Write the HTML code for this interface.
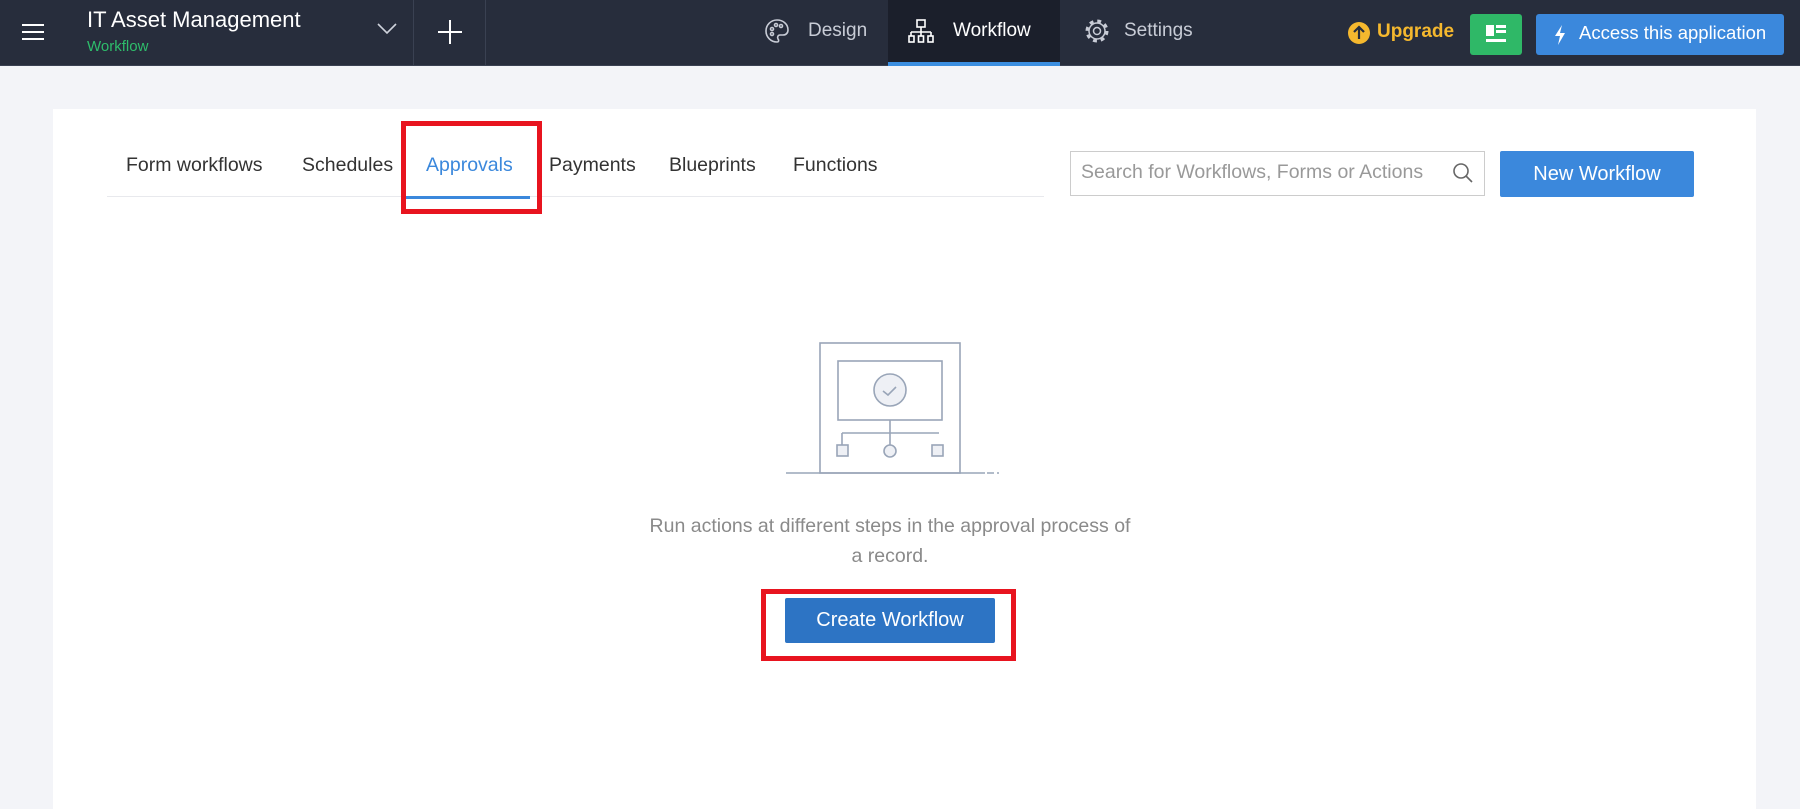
<!DOCTYPE html>
<html><head><meta charset="utf-8"><style>
*{margin:0;padding:0;box-sizing:border-box}
body{width:1800px;height:800px;background:#f3f4f8;font-family:"Liberation Sans",sans-serif;position:relative;overflow:hidden}
.a{position:absolute;white-space:nowrap}
.hdr{position:absolute;left:0;top:0;width:1800px;height:66px;background:#272d3c;border-bottom:1px solid #3a4152}
.card{position:absolute;left:53px;top:109px;width:1703px;height:700px;background:#fff}
.tab{position:absolute;top:154px;font-size:19.5px;color:#333}
</style></head><body>
<div class="hdr">
  <div class="a" style="left:22px;top:24px;width:22px;height:2px;background:#fff;box-shadow:0 7px 0 #fff,0 14px 0 #fff"></div>
  <div class="a" style="left:87px;top:7px;font-size:22px;color:#fff">IT Asset Management</div>
  <div class="a" style="left:87px;top:38px;font-size:15px;color:#2ebd6b">Workflow</div>
  <svg class="a" style="left:376px;top:22px" width="22" height="14"><path d="M2 2 L11 11 L20 2" stroke="#cfd3dc" stroke-width="1.6" fill="none"/></svg>
  <div class="a" style="left:413px;top:0;width:1px;height:66px;background:#3a4152"></div>
  <div class="a" style="left:485px;top:0;width:1px;height:66px;background:#3a4152"></div>
  <svg class="a" style="left:437px;top:19px" width="26" height="26"><path d="M13 1V25M1 13H25" stroke="#fff" stroke-width="2"/></svg>
  <svg class="a" style="left:764px;top:18px" width="26" height="26" fill="none" stroke="#c8ccd6" stroke-width="1.6"><path d="M13 2a11 11 0 1 0 0 22c2 0 2-2 1-3-1-2 0-4 2-4h3c3 0 5-2 5-5C24 6 19 2 13 2z"/><circle cx="8" cy="11" r="1.5"/><circle cx="12" cy="7" r="1.5"/><circle cx="17" cy="8" r="1.5"/><circle cx="8" cy="16" r="1.5"/></svg>
  <div class="a" style="left:808px;top:20px;font-size:19px;color:#c8ccd6">Design</div>
  <div class="a" style="left:888px;top:0;width:172px;height:66px;background:#1b1f2b;border-bottom:4px solid #3b8ee0"></div>
  <svg class="a" style="left:908px;top:19px" width="26" height="26" fill="none" stroke="#fff" stroke-width="1.6"><rect x="9" y="1" width="8" height="7"/><path d="M13 8v5M3 13h20M3 13v4M13 13v4M23 13v4"/><rect x="1" y="17" width="5" height="6"/><rect x="10.5" y="17" width="5" height="6"/><rect x="20" y="17" width="5" height="6"/></svg>
  <div class="a" style="left:953px;top:20px;font-size:19px;color:#fff">Workflow</div>
  <svg class="a" style="left:1084px;top:18px" width="26" height="26" fill="none" stroke="#c8ccd6"><circle cx="13" cy="13" r="10" stroke-width="3" stroke-dasharray="3.9 3.95"/><circle cx="13" cy="13" r="8" stroke-width="1.5"/><circle cx="13" cy="13" r="3.5" stroke-width="1.5"/></svg>
  <div class="a" style="left:1124px;top:20px;font-size:19px;color:#c8ccd6">Settings</div>
  <div class="a" style="left:1348px;top:22px;width:22px;height:22px;border-radius:50%;background:#f5b82e"></div>
  <svg class="a" style="left:1348px;top:22px" width="22" height="22"><path d="M11 17V6M6 10l5-5 5 5" stroke="#272d3c" stroke-width="2.2" fill="none"/></svg>
  <div class="a" style="left:1377px;top:21px;font-size:19px;color:#f5b82e;font-weight:bold">Upgrade</div>
  <div class="a" style="left:1470px;top:14px;width:52px;height:41px;background:#2fb867;border-radius:3px"></div>
  <div class="a" style="left:1486px;top:25px;width:8px;height:11px;background:#fff"></div>
  <div class="a" style="left:1496px;top:25px;width:10px;height:3px;background:#fff;box-shadow:0 5px 0 #fff"></div>
  <div class="a" style="left:1486px;top:39px;width:20px;height:3px;background:#fff"></div>
  <div class="a" style="left:1536px;top:14px;width:248px;height:41px;background:#3b88dc;border-radius:3px"></div>
  <svg class="a" style="left:1553px;top:24px" width="14" height="22"><path d="M9 1L2 12h5l-2 9 7-12H7z" fill="#fff"/></svg>
  <div class="a" style="left:1579px;top:22px;font-size:18.5px;color:#fff">Access this application</div>
</div>
<div class="card"></div>
<div class="tab" style="left:126px">Form workflows</div>
<div class="tab" style="left:302px">Schedules</div>
<div class="tab" style="left:426px;color:#3b88dc">Approvals</div>
<div class="tab" style="left:549px">Payments</div>
<div class="tab" style="left:669px">Blueprints</div>
<div class="tab" style="left:793px">Functions</div>
<div class="a" style="left:107px;top:196px;width:937px;height:1px;background:#e8e9ed"></div>
<div class="a" style="left:406px;top:196px;width:124px;height:3px;background:#3b88dc"></div>
<div class="a" style="left:401px;top:121px;width:141px;height:93px;border:5px solid #e8141f"></div>
<div class="a" style="left:1070px;top:151px;width:415px;height:45px;border:1px solid #ccc;background:#fff"></div>
<div class="a" style="left:1081px;top:161px;font-size:19.5px;color:#999">Search for Workflows, Forms or Actions</div>
<svg class="a" style="left:1452px;top:162px" width="22" height="22" fill="none" stroke="#666" stroke-width="1.6"><circle cx="9" cy="9" r="7"/><path d="M14 14l6 6"/></svg>
<div class="a" style="left:1500px;top:151px;width:194px;height:46px;background:#3b88dc;border-radius:2px;color:#fff;font-size:20px;text-align:center;line-height:46px">New Workflow</div>
<svg class="a" style="left:780px;top:335px" width="230" height="145" fill="none" stroke="#99a5b8" stroke-width="1.6">
<rect x="40" y="8" width="140" height="130"/>
<rect x="58" y="26" width="104" height="59"/>
<circle cx="110" cy="55" r="16" fill="#eef0f5"/>
<path d="M103 56l5 4 8-8"/>
<path d="M110 85v25M62 98h97M62 98v12"/>
<rect x="57" y="110" width="11" height="11" fill="#eef0f5"/>
<rect x="152" y="110" width="11" height="11" fill="#eef0f5"/>
<circle cx="110" cy="116" r="6" fill="#eef0f5"/>
<path d="M6 138H205M207 138h7M217 138h2"/>
</svg>
<div class="a" style="left:560px;top:511px;width:660px;text-align:center;font-size:19.5px;line-height:30px;color:#8a8a8a;white-space:normal">Run actions at different steps in the approval process of<br>a record.</div>
<div class="a" style="left:761px;top:589px;width:255px;height:72px;border:5px solid #e8141f"></div>
<div class="a" style="left:785px;top:598px;width:210px;height:45px;background:#2d74c4;border-radius:2px;color:#fff;font-size:20px;text-align:center;line-height:45px">Create Workflow</div>
</body></html>
